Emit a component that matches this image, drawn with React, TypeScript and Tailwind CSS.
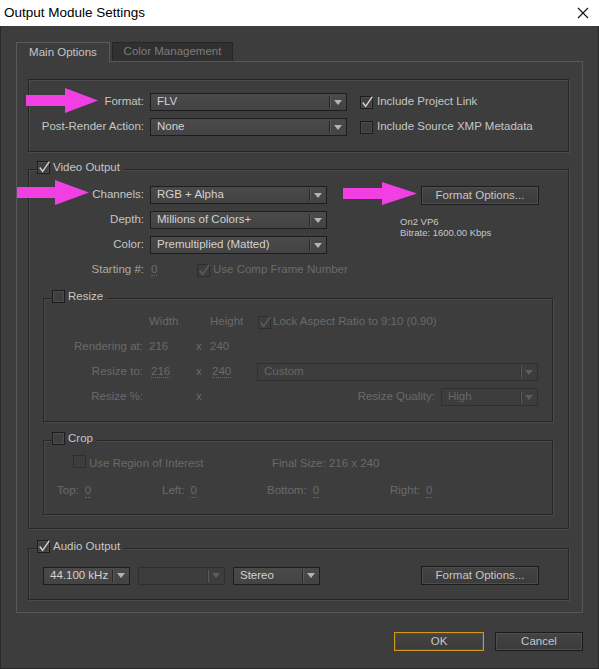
import type { ReactNode } from 'react'

const TXT = 'text-[#c6c6c6]'
const DIM = 'text-[#6a6a6a]'

function Check({ checked, disabled }: { checked?: boolean; disabled?: boolean }) {
  return (
    <span
      className={`relative inline-block w-[13px] h-[13px] shrink-0 border ${
        disabled ? 'border-[#2e2e2e] bg-[#3d3d3d]' : 'border-[#1c1c1c] bg-[#3f3f3f] shadow-[inset_0_0_0_1px_#4c4c4c]'
      }`}
    >
      {checked && (
        <svg viewBox="0 0 13 13" className="absolute -left-px -top-[2px] w-[14px] h-[14px]">
          <path
            d="M2.5 7 L5.2 10.5 L11.5 1.5"
            fill="none"
            stroke={disabled ? '#5c5c5c' : '#cfcfcf'}
            strokeWidth="1.4"
          />
        </svg>
      )}
    </span>
  )
}

function Select({ value, w, disabled }: { value?: string; w: string; disabled?: boolean }) {
  return (
    <div
      className={`${w} h-[18px] flex items-center border ${
        disabled
          ? 'border-[#2f2f2f] bg-[#3d3d3d] text-[#676767]'
          : 'border-[#1d1d1d] bg-gradient-to-b from-[#4a4a4a] to-[#434343] text-[#d2d2d2]'
      }`}
    >
      <span className="flex-1 pl-[6px] truncate leading-none">{value}</span>
      <span className={`w-px h-[12px] ${disabled ? 'bg-[#333]' : 'bg-[#262626]'} shadow-[1px_0_0_#5a5a5a]`} />
      <span className="w-[16px] flex justify-center">
        <svg width="8" height="5" viewBox="0 0 8 5">
          <path d="M0 0 H8 L4 5 Z" fill={disabled ? '#5e5e5e' : '#b4b4b4'} />
        </svg>
      </span>
    </div>
  )
}

function Btn({ children, w, primary }: { children: ReactNode; w: string; primary?: boolean }) {
  return (
    <div
      className={`${w} h-[19px] flex items-center justify-center ${TXT} bg-gradient-to-b from-[#444] to-[#3b3b3b] border ${
        primary ? 'border-[#d19a1c]' : 'border-[#1b1b1b]'
      } shadow-[inset_0_0_0_1px_#4e4e4e]`}
    >
      {children}
    </div>
  )
}

function Group({
  legend,
  checked,
  className,
  children,
}: {
  legend?: string
  checked?: boolean
  className: string
  children: ReactNode
}) {
  return (
    <div className={`relative border border-[#262626] shadow-[1px_1px_0_#4a4a4a,inset_1px_1px_0_#4a4a4a] ${className}`}>
      {legend && (
        <div className="absolute -top-[9px] left-[8px] flex items-center gap-[3px] pr-[4px] bg-[#3d3d3d]">
          <Check checked={checked} />
          <span className={`${TXT} leading-none`}>{legend}</span>
        </div>
      )}
      {children}
    </div>
  )
}

function Dotted({ children }: { children: ReactNode }) {
  return <span className={`${DIM} border-b border-dotted border-[#6a6a6a] leading-[13px]`}>{children}</span>
}

export default function App() {
  return (
    <div
      className="relative w-[599px] h-[669px] bg-[#3d3d3d] flex flex-col overflow-hidden text-[11.5px]"
      style={{ fontFamily: '"Liberation Sans", Arial, sans-serif' }}
    >
      {/* title bar */}
      <div className="h-[26px] shrink-0 bg-white flex items-center justify-between pl-[4px] pr-[10px]">
        <span className="text-[13.5px] text-black">Output Module Settings</span>
        <svg width="12" height="12" viewBox="0 0 12 12">
          <path d="M1 1 L11 11 M11 1 L1 11" stroke="#111" strokeWidth="1.1" />
        </svg>
      </div>

      <div className="flex-1 flex flex-col border-x border-b border-[#2a2a2a]">
        {/* tabs */}
        <div className="mt-[16px] ml-[15px] flex items-end">
          <div className={`relative z-10 w-[94px] h-[20px] -mb-px flex items-center justify-center bg-[#3d3d3d] border-x border-t border-[#5a5a5a] ${TXT}`}>
            Main Options
          </div>
          <div className="ml-[2px] w-[121px] h-[19px] flex items-center justify-center bg-[#303030] border-x border-t border-[#262626] text-[#7c7c7c]">
            Color Management
          </div>
        </div>

        {/* panel */}
        <div className="ml-[15px] w-[567px] h-[552px] border border-[#575757]">
          {/* format */}
          <Group className="mt-[17px] ml-[11px] w-[541px] h-[73px] pt-[13px]">
            <div className="flex items-center h-[18px]">
              <span className={`w-[115px] text-right ${TXT}`}>Format:</span>
              <div className="ml-[6px]">
                <Select value="FLV" w="w-[197px]" />
              </div>
              <div className="ml-[13px] flex items-center gap-[4px]">
                <Check checked />
                <span className={TXT}>Include Project Link</span>
              </div>
            </div>
            <div className="flex items-center h-[18px] mt-[7px]">
              <span className={`w-[115px] text-right ${TXT}`}>Post-Render Action:</span>
              <div className="ml-[6px]">
                <Select value="None" w="w-[197px]" />
              </div>
              <div className="ml-[13px] flex items-center gap-[4px]">
                <Check />
                <span className={TXT}>Include Source XMP Metadata</span>
              </div>
            </div>
          </Group>

          {/* video output */}
          <Group legend="Video Output" checked className="mt-[17px] ml-[11px] w-[541px] h-[360px] pt-[16px]">
            <div className="flex">
              <div className="w-[298px] shrink-0 flex flex-col gap-[7px]">
                {[
                  ['Channels:', 'RGB + Alpha'],
                  ['Depth:', 'Millions of Colors+'],
                  ['Color:', 'Premultiplied (Matted)'],
                ].map(([l, v]) => (
                  <div key={l} className="flex items-center h-[18px]">
                    <span className={`w-[115px] text-right ${TXT}`}>{l}</span>
                    <div className="ml-[6px]">
                      <Select value={v} w="w-[177px]" />
                    </div>
                  </div>
                ))}
                <div className="flex items-center h-[18px] whitespace-nowrap">
                  <span className={`w-[115px] shrink-0 text-right text-[#a9a9a9]`}>Starting #:</span>
                  <span className="ml-[7px] w-[46px] shrink-0">
                    <Dotted>0</Dotted>
                  </span>
                  <Check checked disabled />
                  <span className={`ml-[3px] ${DIM}`}>Use Comp Frame Number</span>
                </div>
              </div>
              <div className="ml-[73px] flex flex-col">
                <div className="ml-[21px]">
                  <Btn w="w-[118px]">Format Options...</Btn>
                </div>
                <div className="mt-[11px] text-[9.5px] leading-[11px] text-[#c8c8c8]">
                  <div>On2 VP6</div>
                  <div>Bitrate: 1600.00 Kbps</div>
                </div>
              </div>
            </div>

            {/* resize */}
            <Group legend="Resize" className="mt-[19px] ml-[14px] w-[510px] h-[124px] pt-[14px]">
              <div className="flex flex-col gap-[7px]">
                <div className="flex items-center h-[18px]">
                  <span className="w-[99px]" />
                  <span className={`ml-[6px] w-[61px] ${DIM}`}>Width</span>
                  <span className={`w-[48px] ${DIM}`}>Height</span>
                  <Check checked disabled />
                  <span className={`ml-[2px] ${DIM}`}>Lock Aspect Ratio to 9:10 (0.90)</span>
                </div>
                <div className="flex items-center h-[18px]">
                  <span className={`w-[99px] text-right ${DIM}`}>Rendering at:</span>
                  <span className={`ml-[6px] w-[47px] ${DIM}`}>216</span>
                  <span className={`w-[14px] ${DIM}`}>x</span>
                  <span className={DIM}>240</span>
                </div>
                <div className="flex items-center h-[18px]">
                  <span className={`w-[99px] text-right ${DIM}`}>Resize to:</span>
                  <span className="ml-[8px] w-[45px]">
                    <Dotted>216</Dotted>
                  </span>
                  <span className={`w-[16px] ${DIM}`}>x</span>
                  <span className="w-[45px]">
                    <Dotted>240</Dotted>
                  </span>
                  <Select value="Custom" w="w-[281px]" disabled />
                </div>
                <div className="flex items-center h-[18px]">
                  <span className={`w-[99px] text-right ${DIM}`}>Resize %:</span>
                  <span className="ml-[6px] w-[47px]" />
                  <span className={`w-[61px] ${DIM}`}>x</span>
                  <span className={`w-[178px] text-right ${DIM}`}>Resize Quality:</span>
                  <div className="ml-[6px]">
                    <Select value="High" w="w-[97px]" disabled />
                  </div>
                </div>
              </div>
            </Group>

            {/* crop */}
            <Group legend="Crop" className="mt-[18px] ml-[14px] w-[510px] h-[75px] pt-[14px]">
              <div className="flex items-center h-[18px]">
                <span className="ml-[29px]">
                  <Check disabled />
                </span>
                <span className={`ml-[3px] w-[183px] ${DIM}`}>Use Region of Interest</span>
                <span className={DIM}>Final Size: 216 x 240</span>
              </div>
              <div className="flex items-center h-[18px] mt-[9px] ml-[13px]">
                {[
                  ['Top:', 'w-[105px]'],
                  ['Left:', 'w-[105px]'],
                  ['Bottom:', 'w-[123px]'],
                  ['Right:', 'w-[80px]'],
                ].map(([l, w]) => (
                  <div key={l} className={`${w} flex items-center gap-[6px]`}>
                    <span className={DIM}>{l}</span>
                    <Dotted>0</Dotted>
                  </div>
                ))}
              </div>
            </Group>
          </Group>

          {/* audio */}
          <Group legend="Audio Output" checked className="mt-[19px] ml-[11px] w-[541px] h-[52px] pt-[17px]">
            <div className="flex items-center ml-[14px]">
              <Select value="44.100 kHz" w="w-[87px]" />
              <div className="ml-[8px]">
                <Select w="w-[87px]" disabled />
              </div>
              <div className="ml-[8px]">
                <Select value="Stereo" w="w-[87px]" />
              </div>
              <div className="ml-[101px]">
                <Btn w="w-[118px]">Format Options...</Btn>
              </div>
            </div>
          </Group>
        </div>

        {/* dialog buttons */}
        <div className="mt-[19px] flex justify-end gap-[11px] pr-[15px]">
          <Btn w="w-[90px]" primary>
            OK
          </Btn>
          <Btn w="w-[88px]">Cancel</Btn>
        </div>
      </div>

      {/* annotation arrows */}
      <svg className="absolute inset-0 pointer-events-none" width="599" height="669">
        <polygon points="26,95 65,95 65,88 98,100.5 65,113 65,106 26,106" fill="#f23fe3" />
        <polygon points="17,187 55,187 55,180 89,192.5 55,205 55,198 17,198" fill="#f23fe3" />
        <polygon points="343,188 382,188 382,182 417,193.5 382,205 382,199 343,199" fill="#f23fe3" />
      </svg>
    </div>
  )
}
